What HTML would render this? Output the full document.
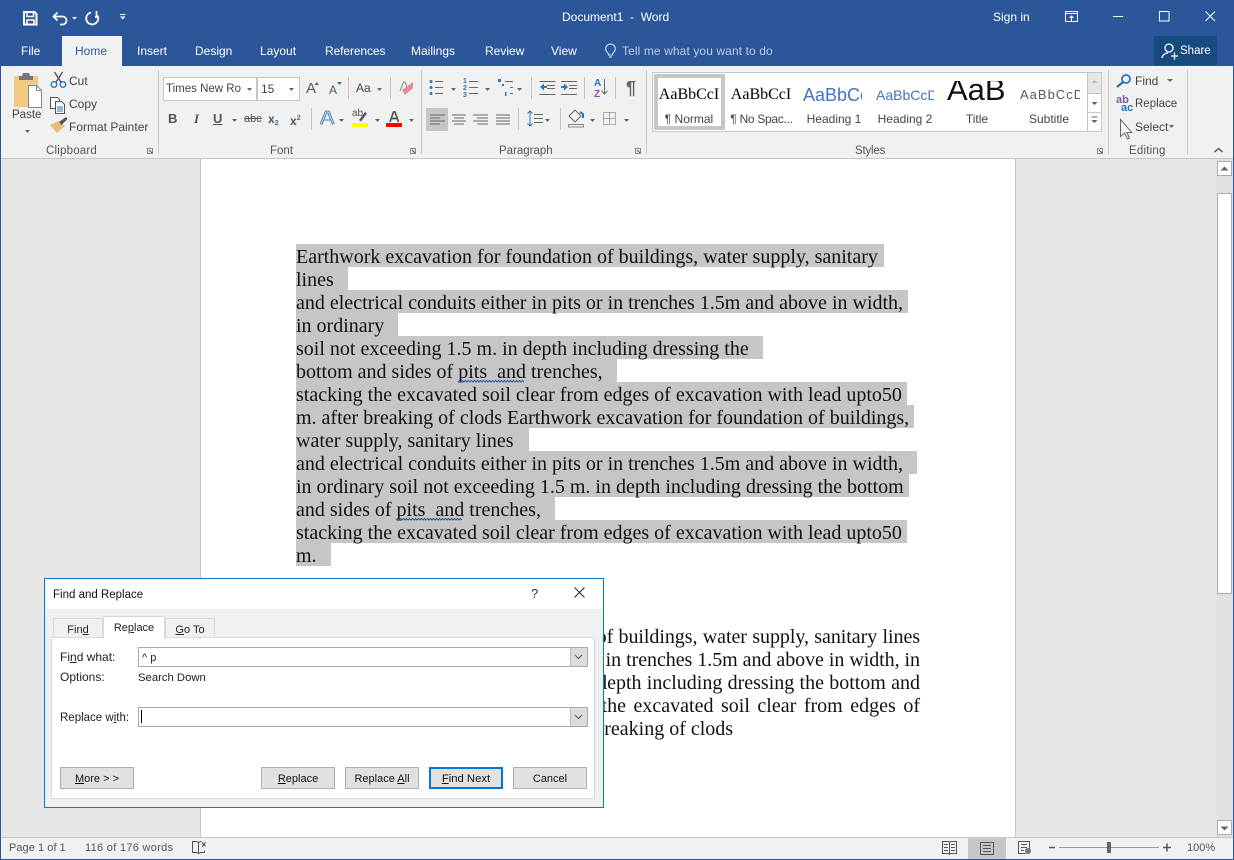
<!DOCTYPE html>
<html><head><meta charset="utf-8"><title>Document1 - Word</title>
<style>
html,body{margin:0;padding:0}
body{width:1234px;height:860px;position:relative;overflow:hidden;background:#e6e6e6;font-family:"Liberation Sans",sans-serif;font-size:12px;color:#444}
.a{position:absolute;white-space:nowrap}
.t{position:absolute;white-space:nowrap;line-height:16px}
.w{color:#fff}
svg{position:absolute;overflow:visible}
.sep{position:absolute;width:1px;background:#c6c6c6}
.sel{position:absolute;left:296px;height:23px;background:#c6c6c6}
.l{position:absolute;left:296px;white-space:pre;font:20px/23px "Liberation Serif",serif;color:#111;height:23px}
.j{width:624px;text-align:justify;text-align-last:justify;white-space:normal}
.btn{position:absolute;top:767px;width:72px;height:20px;border:1px solid #adadad;background:#e1e1e1;text-align:center;line-height:22px;color:#111;font-size:11px}
.d{font-size:11px;color:#222}
.st{position:absolute;text-align:center;white-space:nowrap;overflow:hidden}
.g{font-size:11.5px;color:#555;top:143px}
</style></head><body>
<div class="a" style="left:0;top:0;width:1234px;height:66px;background:#2b579a"></div>
<div class="a" style="left:0;top:66px;width:1234px;height:92px;background:#f1f1f1"></div>
<div class="a" style="left:0;top:158px;width:1234px;height:1px;background:#c6c6c6"></div>
<div class="a" style="left:0;top:0;width:1px;height:860px;background:#2b579a;z-index:9"></div>
<div class="a" style="left:1233px;top:0;width:1px;height:860px;background:#2b579a;z-index:9"></div>
<div class="a" style="left:0;top:859px;width:1234px;height:1px;background:#2b579a;z-index:9"></div>

<!-- QAT -->
<svg style="left:0;top:0" width="140" height="36" fill="none" stroke="#fff">
<path d="M24 12h10.500l2 2v10.500H24z" stroke-width="2"/><path d="M27 11v5.500h6.500V11" stroke-width="1.500"/><path d="M27 25v-5h7v5" stroke-width="1.600"/>
<path d="M54 16.500h8.500a4 4 0 0 1 0 8H60M57.500 12.500l-4 4 4 4" stroke-width="1.800"/>
<path d="M72 17h5l-2.500 2.500z" fill="#fff" stroke="none"/>
<path d="M91 12.500a6 6 0 1 0 6.500 3" stroke-width="1.800"/><path d="M96.500 11v6h-1.500" stroke-width="1.700"/>
<path d="M120 14.500h5.500" stroke-width="1"/><path d="M120 16.500h5.500l-2.750 3z" fill="#fff" stroke="none"/>
</svg>
<div class="t w" style="left:562px;top:9px">Document1&nbsp; -&nbsp; Word</div>
<div class="t w" style="left:993px;top:9px">Sign in</div>
<svg style="left:1060px;top:8px" width="174" height="20" fill="none" stroke="#fff" stroke-width="1">
<path d="M5.500 3.500h12v10h-12zM5.500 5.500h12M11.500 13V8M9.500 10l2-2 2 2"/>
<path d="M53 8.500h10M99.500 3.500h9.500v9.500h-9.500zM145.500 3.500l9.500 9.500m0-9.500l-9.500 9.500"/>
</svg>

<!-- tabs -->
<div class="a" style="left:62px;top:36px;width:60px;height:30px;background:#f1f1f1"></div>
<div class="t w" style="left:21px;top:43px">File</div>
<div class="t" style="left:75px;top:43px;color:#2b579a">Home</div>
<div class="t w" style="left:137px;top:43px">Insert</div>
<div class="t w" style="left:195px;top:43px">Design</div>
<div class="t w" style="left:260px;top:43px">Layout</div>
<div class="t w" style="left:325px;top:43px;letter-spacing:-.1px">References</div>
<div class="t w" style="left:411px;top:43px">Mailings</div>
<div class="t w" style="left:485px;top:43px">Review</div>
<div class="t w" style="left:551px;top:43px">View</div>
<svg style="left:604px;top:43px" width="14" height="16" fill="none" stroke="#dfe6f1" stroke-width="1"><path d="M3.500 9.500a4.800 4.800 0 1 1 6 0c-.8.700-1 1.500-1 2.500h-4c0-1-.2-1.800-1-2.500zM5 14h3"/></svg>
<div class="t" style="left:622px;top:43px;color:#bccbe2;letter-spacing:.1px">Tell me what you want to do</div>
<div class="a" style="left:1154px;top:36px;width:63px;height:29px;background:#174a7e"></div>
<svg style="left:1160px;top:42px" width="20" height="18" fill="none" stroke="#fff" stroke-width="1.300"><circle cx="9" cy="6" r="4"/><path d="M2 16c.5-3 3-5 6-5M11 14h7M14.500 10.500v7"/></svg>
<div class="t w" style="left:1180px;top:43px;font-size:11.500px">Share</div>

<!-- separators -->
<div class="sep" style="left:158px;top:70px;height:84px"></div>
<div class="sep" style="left:421px;top:70px;height:84px"></div>
<div class="sep" style="left:646px;top:70px;height:84px"></div>
<div class="sep" style="left:1108px;top:70px;height:84px"></div>
<div class="sep" style="left:1187px;top:70px;height:84px"></div>

<!-- clipboard -->
<svg style="left:0;top:66px" width="160" height="90">
<rect x="14" y="10" width="24" height="31" fill="#f0c983" rx="1"/>
<path d="M19 10h3l1-3h6l1 3h3v4H19z" fill="#777"/>
<path d="M28.500 19.500h8l5 5v17h-13z" fill="#fff" stroke="#888"/><path d="M36.500 19.500v5h5" fill="none" stroke="#888"/>
<path d="M25 64h5l-2.500 3z" fill="#666"/>
<g fill="none" stroke-width="1.400"><path d="M54.500 6l7 11M62.500 6l-7 11" stroke="#555"/><circle cx="54" cy="18.500" r="2.800" stroke="#2e75b6"/><circle cx="63" cy="18.500" r="2.800" stroke="#2e75b6"/></g>
<g fill="#fff" stroke="#555"><path d="M50.500 31.500h7l2 2v9h-9z"/><path d="M55.500 35.500h6l3 3v9h-9z"/></g><path d="M57 41h6M57 43h6M57 45h6" stroke="#2e75b6"/>
<path d="M50 59l8-4 7 5-8 7z" fill="#e7bd7a"/><path d="M59 56l7-5 1.500 2-6 6z" fill="#555"/>
</svg>
<div class="t" style="left:12px;top:107px;font-size:11.500px">Paste</div>
<div class="t" style="left:69px;top:73px">Cut</div>
<div class="t" style="left:69px;top:96px">Copy</div>
<div class="t" style="left:69px;top:119px">Format Painter</div>
<div class="t g" style="left:46px;letter-spacing:.2px">Clipboard</div>

<!-- font -->
<div class="a" style="left:163px;top:77px;width:92px;height:22px;border:1px solid #c6c6c6;background:#fff;line-height:23px;font-size:11.500px"><span style="margin-left:2px;color:#444">Times New Ro</span></div>
<div class="a" style="left:257px;top:77px;width:41px;height:22px;border:1px solid #c6c6c6;background:#fff;line-height:22px"><span style="margin-left:3px">15</span></div>
<svg style="left:0;top:66px" width="1234" height="90" fill="#666">
<path d="M247 22h5l-2.500 3zM289 22h5l-2.500 3z"/>
<path d="M319 19h-4.500l2.250-3z" fill="#2e75b6"/>
<path d="M337 16h5l-2.500 3z" fill="#2e75b6"/>
<path d="M377 22h5l-2.500 3z"/>
<path d="M402 24l11-8v6l-8 7z" fill="#e98a9b"/><path d="M400 25l3.500-9h1.500l2 5" fill="none" stroke="#888"/>
<path d="M232 53h5l-2.500 3zM339 53h5l-2.500 3zM375 53h5l-2.500 3zM409 53h5l-2.500 3z"/>
<rect x="352" y="57" width="16" height="4" fill="#ffff00"/>
<rect x="386" y="57" width="16" height="4" fill="#ff0000"/>
<path d="M321 58.500l5-12.500h2.500l5 12.500" fill="none" stroke="#3a78b8" stroke-width="2.800"/><path d="M321 58.500l5-12.500h2.500l5 12.500" fill="none" stroke="#dce9f5" stroke-width="1"/><path d="M324.500 54h5.500" stroke="#3a78b8"/>
<path d="M359 54l6-8 2 1.500-6 8z" fill="#555"/>
<path d="M390 56l3.500-10h1.500l3.500 10M391.500 52.500h5.500" fill="none" stroke="#555" stroke-width="1.700"/>
</svg>
<div class="a" style="left:306px;top:80px;font-size:15px;color:#555">A</div>
<div class="a" style="left:329px;top:83px;font-size:12px;color:#555">A</div>
<div class="t" style="left:356px;top:80px">Aa</div>
<div class="sep" style="left:348px;top:77px;height:22px"></div>
<div class="sep" style="left:390px;top:77px;height:22px"></div>
<div class="sep" style="left:311px;top:108px;height:22px"></div>
<div class="t" style="left:168px;top:111px;font-size:13px;font-weight:bold;color:#555">B</div>
<div class="t" style="left:194px;top:111px;font-size:13px;font-style:italic;font-weight:bold;font-family:'Liberation Serif';color:#555">I</div>
<div class="t" style="left:213px;top:111px;font-size:13px;font-weight:bold;text-decoration:underline;color:#555">U</div>
<div class="t" style="left:244px;top:111px;font-size:11px;text-decoration:line-through;color:#555">abc</div>
<div class="t" style="left:268px;top:111px;font-weight:bold;color:#555">x<span style="font-size:7px;color:#2e75b6;vertical-align:-2px">2</span></div>
<div class="t" style="left:290px;top:111px;font-weight:bold;color:#555">x<span style="font-size:7px;color:#2e75b6;vertical-align:5px">2</span></div>
<div class="t" style="left:352px;top:106px;font-size:10px;color:#555">ab</div>
<div class="t g" style="left:270px">Font</div>

<!-- paragraph -->
<div class="a" style="left:426px;top:108px;width:22px;height:23px;background:#c6c6c6"></div>
<svg style="left:420px;top:66px" width="230" height="90" fill="none" stroke="#666" stroke-width="1">
<path d="M15 15.500h8M15 21.500h8M15 27.500h8M49 15.500h9M49 21.500h9M49 27.500h9M85 15.500h8M90 21.500h3M90 27.500h3"/>
<g fill="#2e75b6" stroke="none"><circle cx="11" cy="15.500" r="1.500"/><circle cx="11" cy="21.500" r="1.500"/><circle cx="11" cy="27.500" r="1.500"/><path d="M78 13h3v3h-3zM82 18h2v2h-2zM85 26h1.500v4H85z"/><path d="M120 21l4-3.500V20h3v2h-3v2.500zM148 21l-4-3.500V20h-3v2h3v2.500z"/></g>
<g font-family="Liberation Sans" font-size="7" font-weight="bold" fill="#2e75b6" stroke="none"><text x="43" y="17">1</text><text x="43" y="24">2</text><text x="43" y="31">3</text></g>
<g fill="#666" stroke="none"><path d="M31 22h5l-2.500 3zM65 22h5l-2.500 3zM97 22h5l-2.500 3zM125 53h5l-2.500 3zM170 53h5l-2.500 3zM204 53h5l-2.500 3z"/></g>
<path d="M119.500 15.500h16M127 19.500h8M127 22.500h8M119.500 28.500h16M141 15.500h16M149 19.500h8M149 22.500h8M141 28.500h16"/>
<path d="M10 49h15M10 52h10M10 55h15M10 58h10M32 49h14M34 52h10M32 55h14M34 58h10M53 49h15M57 52h11M53 55h15M57 58h11M76 49h14M76 52h14M76 55h14M76 58h14"/>
<path d="M114 48.500h9M114 52.500h9M114 56.500h9"/><path d="M110 45v15M107.500 47.500l2.500-2.500 2.500 2.500M107.500 57.500l2.500 2.500 2.500-2.500" stroke="#2e75b6"/>
<path d="M155 44l-6 6 6 6 6-6z"/><path d="M160 46l3 2v4" stroke="#2e75b6" stroke-width="2"/><path d="M148.500 58.500h15v2.500h-15z" stroke="#888"/>
<path d="M183.500 46.500h12v12h-12zM183.500 52.500h12M189.500 46.500v12" stroke-dasharray="1 1"/>
<path d="M184.500 13v15M181.500 25l3 3 3-3"/>
</svg>
<div class="sep" style="left:531px;top:77px;height:22px"></div>
<div class="sep" style="left:584px;top:77px;height:22px"></div>
<div class="sep" style="left:615px;top:77px;height:22px"></div>
<div class="sep" style="left:518px;top:108px;height:22px"></div>
<div class="sep" style="left:560px;top:108px;height:22px"></div>
<div class="a" style="left:594px;top:78px;font-size:10px;font-weight:bold;color:#2e75b6;line-height:11px">A<br><span style="color:#8a4db0">Z</span></div>
<div class="a" style="left:626px;top:78px;font-size:18px;font-weight:bold;color:#666">¶</div>
<div class="t g" style="left:499px">Paragraph</div>

<!-- styles gallery -->
<div class="a" style="left:652px;top:72px;width:435px;height:58px;border:1px solid #c6c6c6;background:#fff;border-right:0"></div>
<div class="a" style="left:654px;top:74px;width:63px;height:48px;border:4px solid #c6c6c6"></div>
<div class="st" style="left:658px;top:86px;width:62px;font:16px/18px 'Liberation Serif';color:#000">AaBbCcI</div>
<div class="st" style="left:730px;top:86px;width:62px;font:16px/18px 'Liberation Serif';color:#000">AaBbCcI</div>
<div class="st" style="left:803px;top:84px;width:59px;font:18px/22px 'Liberation Sans';color:#4472c4;text-align:left">AaBbCc</div>
<div class="st" style="left:876px;top:86px;width:58px;font:14px/18px 'Liberation Sans';color:#4472c4;text-align:left">AaBbCcD</div>
<div class="st" style="left:947px;top:81px;width:57px;height:21px;font:31px/18px 'Liberation Sans';color:#111;text-align:left">AaB</div>
<div class="st" style="left:1020px;top:86px;width:60px;font:13px/17px 'Liberation Sans';color:#595959;letter-spacing:1px;text-align:left">AaBbCcD</div>
<div class="st" style="left:657px;top:111px;width:64px;color:#444;line-height:16px">¶ Normal</div>
<div class="st" style="left:727px;top:111px;width:69px;color:#444;line-height:16px;letter-spacing:-.3px">¶ No Spac...</div>
<div class="st" style="left:799px;top:111px;width:70px;color:#444;line-height:16px">Heading 1</div>
<div class="st" style="left:870px;top:111px;width:70px;color:#444;line-height:16px">Heading 2</div>
<div class="st" style="left:942px;top:111px;width:70px;color:#444;line-height:16px">Title</div>
<div class="st" style="left:1014px;top:111px;width:70px;color:#444;line-height:16px">Subtitle</div>
<div class="a" style="left:1087px;top:72px;width:13px;height:20px;border:1px solid #c6c6c6;background:#e6e6e6"></div>
<div class="a" style="left:1087px;top:93px;width:13px;height:18px;border:1px solid #c6c6c6;background:#fff"></div>
<div class="a" style="left:1087px;top:112px;width:13px;height:18px;border:1px solid #c6c6c6;background:#fff"></div>
<svg style="left:1087px;top:72px" width="15" height="60" fill="#666"><path d="M4.500 11l3-3 3 3z" fill="#bbb"/><path d="M4.500 30h6l-3 3zM4.500 44.500h6v1h-6zM4.500 48h6l-3 3z"/></svg>
<div class="t g" style="left:855px;letter-spacing:-.2px">Styles</div>

<!-- editing -->
<svg style="left:1110px;top:70px" width="80" height="80" fill="none">
<circle cx="16" cy="9" r="4" stroke="#2e75b6" stroke-width="1.800"/><path d="M13 12l-6 5" stroke="#2e75b6" stroke-width="2.400"/>
<path d="M57 9h6l-3 3z" fill="#666"/><path d="M59 55h5l-2.500 3z" fill="#666"/>
<path d="M10.500 49.500v17l4-3.500 3 6 2-1-2.800-5.500h5z" fill="#fff" stroke="#666"/>
</svg>
<div class="a" style="left:1116px;top:96px;font-size:11px;font-weight:bold;line-height:8px;color:#333"><span style="color:#7a5aa8;margin-left:0">ab</span><br><span style="color:#2e75b6;margin-left:5px">ac</span></div>
<div class="t" style="left:1135px;top:73px">Find</div>
<div class="t" style="left:1135px;top:96px;font-size:11.500px">Replace</div>
<div class="t" style="left:1135px;top:119px">Select</div>
<div class="t g" style="left:1129px;letter-spacing:.2px">Editing</div>
<svg style="left:1213px;top:145px" width="14" height="10" fill="none" stroke="#666" stroke-width="1.500"><path d="M1.500 7l4-3.500 4 3.500"/></svg>
<svg style="left:0;top:0" width="1234" height="160" fill="none" stroke="#888"><path d="M147.500 148.500h5v5h-5zM410.500 148.500h5v5h-5zM635.500 148.500h5v5h-5zM1097.500 148.500h5v5h-5z" stroke-width="1"/><path d="M149 150l3 3M412 150l3 3M637 150l3 3M1099 150l3 3" stroke="#555"/></svg>

<!-- page -->
<div class="a" style="left:200px;top:159px;width:814px;height:679px;background:#fff;border-left:1px solid #c6c6c6;border-right:1px solid #c6c6c6"></div>
<div class="sel" style="top:244px;width:588px"></div>
<div class="sel" style="top:267px;width:52px"></div>
<div class="sel" style="top:290px;width:612px"></div>
<div class="sel" style="top:313px;width:102px"></div>
<div class="sel" style="top:336px;width:467px"></div>
<div class="sel" style="top:359px;width:321px"></div>
<div class="sel" style="top:382px;width:611px"></div>
<div class="sel" style="top:405px;width:618px"></div>
<div class="sel" style="top:428px;width:233px"></div>
<div class="sel" style="top:451px;width:621px"></div>
<div class="sel" style="top:474px;width:613px"></div>
<div class="sel" style="top:497px;width:259px"></div>
<div class="sel" style="top:520px;width:611px"></div>
<div class="sel" style="top:543px;width:35px"></div>
<div class="l" style="top:246px">Earthwork excavation for foundation of buildings, water supply, sanitary</div>
<div class="l" style="top:269px">lines</div>
<div class="l" style="top:292px">and electrical conduits either in pits or in trenches 1.5m and above in width,</div>
<div class="l" style="top:315px">in ordinary</div>
<div class="l" style="top:338px">soil not exceeding 1.5 m. in depth including dressing the</div>
<div class="l" style="top:361px">bottom and sides of pits  and trenches,</div>
<div class="l" style="top:384px">stacking the excavated soil clear from edges of excavation with lead upto50</div>
<div class="l" style="top:407px">m. after breaking of clods Earthwork excavation for foundation of buildings,</div>
<div class="l" style="top:430px">water supply, sanitary lines</div>
<div class="l" style="top:453px">and electrical conduits either in pits or in trenches 1.5m and above in width,</div>
<div class="l" style="top:476px">in ordinary soil not exceeding 1.5 m. in depth including dressing the bottom</div>
<div class="l" style="top:499px">and sides of pits  and trenches,</div>
<div class="l" style="top:522px">stacking the excavated soil clear from edges of excavation with lead upto50</div>
<div class="l" style="top:545px">m.</div>
<svg style="left:0;top:370px" width="700" height="160" fill="none" stroke="#2b579a" stroke-width="1"><path d="M458 12l1.500-1.500 1.500 1.500 1.500-1.500 1.500 1.500 1.500-1.500 1.500 1.500 1.500-1.500 1.500 1.500 1.500-1.500 1.500 1.500 1.500-1.500 1.500 1.500 1.500-1.500 1.500 1.500 1.500-1.500 1.500 1.500 1.500-1.500 1.500 1.500 1.500-1.500 1.500 1.500 1.500-1.500 1.500 1.500 1.500-1.500 1.500 1.500 1.500-1.500 1.500 1.500 1.500-1.500 1.500 1.500 1.500-1.500 1.500 1.500 1.500-1.500 1.500 1.500 1.500-1.500 1.500 1.500 1.500-1.500 1.500 1.500 1.500-1.500 1.500 1.500 1.500-1.500 1.500 1.500 1.500-1.500 1.500 1.500 1.500-1.500 1.500 1.500"/><path d="M396 150l1.500-1.500 1.500 1.500 1.500-1.500 1.500 1.500 1.500-1.500 1.500 1.500 1.500-1.500 1.500 1.500 1.500-1.500 1.500 1.500 1.500-1.500 1.500 1.500 1.500-1.500 1.500 1.500 1.500-1.500 1.500 1.500 1.500-1.500 1.500 1.500 1.500-1.500 1.500 1.500 1.500-1.500 1.500 1.500 1.500-1.500 1.500 1.500 1.500-1.500 1.500 1.500 1.500-1.500 1.500 1.500 1.500-1.500 1.500 1.500 1.500-1.500 1.500 1.500 1.500-1.500 1.500 1.500 1.500-1.500 1.500 1.500 1.500-1.500 1.500 1.500 1.500-1.500 1.500 1.500 1.500-1.500 1.500 1.500 1.500-1.500 1.500 1.500"/></svg>
<div class="l j" style="top:626px;letter-spacing:-.06px">Earthwork excavation for foundation of buildings, water supply, sanitary lines</div>
<div class="l j" style="top:649px;letter-spacing:-.06px">and electrical conduits either in pits or in trenches 1.5m and above in width, in</div>
<div class="l j" style="top:672px">ordinary soil not exceeding 1.5 m. in depth including dressing the bottom and</div>
<div class="l j" style="top:695px">sides of pits&nbsp; and trenches, stacking the excavated soil clear from edges of</div>
<div class="l" style="top:718px">excavation with lead upto50 m. after breaking of clods</div>

<!-- scrollbar -->
<div class="a" style="left:1217px;top:159px;width:16px;height:679px;background:#e0e0e0"></div>
<div class="a" style="left:1217px;top:161px;width:13px;height:13px;border:1px solid #ababab;background:#fff"></div>
<div class="a" style="left:1217px;top:193px;width:13px;height:399px;border:1px solid #ababab;background:#fff"></div>
<div class="a" style="left:1217px;top:820px;width:13px;height:13px;border:1px solid #ababab;background:#fff"></div>
<svg style="left:1217px;top:161px" width="15" height="680" fill="#666"><path d="M3.500 9.500l4-4 4 4zM3.500 665.500h8l-4 4z"/></svg>

<!-- status -->
<div class="a" style="left:0;top:837px;width:1234px;height:22px;background:#f1f1f1;border-top:1px solid #c6c6c6;box-sizing:border-box"></div>
<div class="t" style="left:9px;top:840px;font-size:11px;color:#555;letter-spacing:.05px">Page 1 of 1</div>
<div class="t" style="left:85px;top:840px;font-size:11px;color:#555;letter-spacing:.3px">116 of 176 words</div>
<div class="a" style="left:968px;top:838px;width:38px;height:21px;background:#c6c6c6"></div>
<svg style="left:0;top:838px" width="1234" height="21" fill="none" stroke="#555">
<path d="M192.500 3.500h4l2 1v11l-2-1h-4zM198.500 4.500l2-1h1M198.500 15.500l2-1h4v-2"/><path d="M202 4.500l3.500 4m0-4l-3.500 4" stroke="#444"/>
<path d="M942.500 3.500h6l1 1 1-1h6v12h-6l-1 1-1-1h-6zM949.500 4.500v11M944 6.500h4M944 9.500h4M944 12.500h4M951 6.500h4M951 9.500h4M951 12.500h4"/>
<path d="M980.500 4.500h13v12h-13zM983 7.500h8M983 10.500h8M983 13.500h8"/>
<path d="M1018.500 3.500h11v8M1018.500 3.500v12h7M1021 6.500h6M1021 9.500h6M1021 12.500h3"/><circle cx="1028" cy="13" r="3" fill="#777" stroke="none"/>
<path d="M1049 9.500h6M1163 9.500h8M1167 5.500v8" stroke-width="1.500"/><path d="M1059 9.500h100" stroke="#999" stroke-width="1"/>
<rect x="1107" y="4" width="4" height="11" fill="#666" stroke="none"/>
</svg>
<div class="t" style="left:1187px;top:840px;font-size:11px;color:#555">100%</div>

<!-- dialog -->
<div class="a" style="left:44px;top:578px;width:558px;height:228px;border:1px solid #0078d7;background:#f0f0f0"></div>
<div class="a" style="left:45px;top:579px;width:558px;height:30px;background:#fff"></div>
<div class="t d" style="left:53px;top:587px;font-size:11.500px;color:#111">Find and Replace</div>
<div class="t d" style="left:531px;top:586px;font-size:13px;color:#333">?</div>
<svg style="left:574px;top:587px" width="12" height="12" fill="none" stroke="#222"><path d="M.5.500l10 10m0-10l-10 10"/></svg>
<div class="a" style="left:51px;top:637px;width:542px;height:160px;border:1px solid #d9d9d9;background:#fff"></div>
<div class="a" style="left:53px;top:618px;width:50px;height:19px;border:1px solid #d9d9d9;border-bottom:0;box-sizing:border-box;background:#f0f0f0;text-align:center;line-height:22px;font-size:11px;color:#222">Fin<u>d</u></div>
<div class="a" style="left:165px;top:618px;width:50px;height:19px;border:1px solid #d9d9d9;border-bottom:0;box-sizing:border-box;background:#f0f0f0;text-align:center;line-height:22px;font-size:11px;color:#222"><u>G</u>o To</div>
<div class="a" style="left:103px;top:616px;width:62px;height:23px;border:1px solid #d9d9d9;border-bottom:0;box-sizing:border-box;background:#fff;text-align:center;line-height:22px;font-size:11px;color:#222">Re<u>p</u>lace</div>
<div class="t d" style="left:60px;top:649px;font-size:12px">Fi<u>n</u>d what:</div>
<div class="t d" style="left:60px;top:669px;font-size:12px">Options:</div>
<div class="t d" style="left:138px;top:670px;font-size:11.300px">Search Down</div>
<div class="t d" style="left:60px;top:710px;font-size:11.500px">Replace w<u>i</u>th:</div>
<div class="a" style="left:138px;top:647px;width:448px;height:18px;border:1px solid #a9a9a9;background:#fff;line-height:20px;font-size:11px;color:#222"><span style="margin-left:3px">^ p</span></div>
<div class="a" style="left:138px;top:707px;width:448px;height:18px;border:1px solid #a9a9a9;background:#fff"></div>
<div class="a" style="left:141px;top:710px;width:1px;height:13px;background:#000"></div>
<div class="a" style="left:570px;top:648px;width:17px;height:18px;background:#dcdcdc;border-left:1px solid #bbb;box-sizing:border-box"></div>
<div class="a" style="left:570px;top:708px;width:17px;height:18px;background:#dcdcdc;border-left:1px solid #bbb;box-sizing:border-box"></div>
<svg style="left:570px;top:648px" width="18" height="80" fill="none" stroke="#555"><path d="M5 7l3.500 3.500L12 7M5 67l3.500 3.500L12 67"/></svg>
<div class="btn" style="left:60px"><u>M</u>ore &gt; &gt;</div>
<div class="btn" style="left:261px"><u>R</u>eplace</div>
<div class="btn" style="left:345px">Replace <u>A</u>ll</div>
<div class="btn" style="left:429px;width:70px;height:18px;border:2px solid #0078d7;line-height:20px;font-size:11.300px"><u>F</u>ind Next</div>
<div class="btn" style="left:513px">Cancel</div>
</body></html>
